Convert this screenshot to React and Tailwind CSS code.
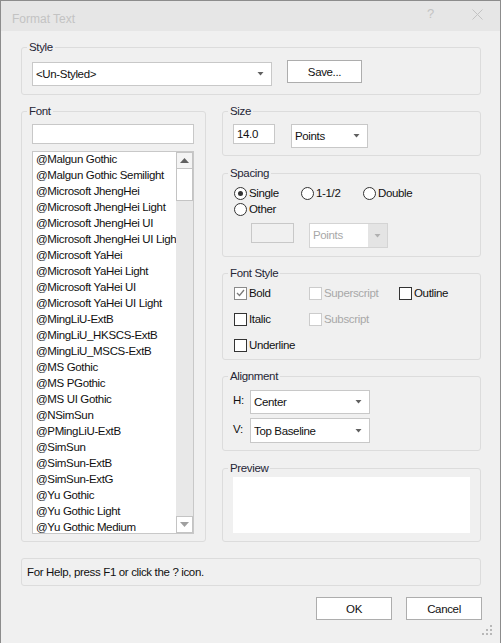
import { useState } from 'react'

const FONTS = [
  '@Malgun Gothic',
  '@Malgun Gothic Semilight',
  '@Microsoft JhengHei',
  '@Microsoft JhengHei Light',
  '@Microsoft JhengHei UI',
  '@Microsoft JhengHei UI Light',
  '@Microsoft YaHei',
  '@Microsoft YaHei Light',
  '@Microsoft YaHei UI',
  '@Microsoft YaHei UI Light',
  '@MingLiU-ExtB',
  '@MingLiU_HKSCS-ExtB',
  '@MingLiU_MSCS-ExtB',
  '@MS Gothic',
  '@MS PGothic',
  '@MS UI Gothic',
  '@NSimSun',
  '@PMingLiU-ExtB',
  '@SimSun',
  '@SimSun-ExtB',
  '@SimSun-ExtG',
  '@Yu Gothic',
  '@Yu Gothic Light',
  '@Yu Gothic Medium',
]

function GroupBox({ label, className = '', children }) {
  return (
    <fieldset className={`border border-[#dcdcdc] rounded-[3px] ${className}`}>
      <legend className="ml-[5px] px-[2px] leading-[14px] text-[#262636]">{label}</legend>
      {children}
    </fieldset>
  )
}

function Arrow({ color = '#606060' }) {
  return (
    <svg width="7" height="4" viewBox="0 0 7 4" className="shrink-0">
      <path d="M0.5 0h6L3.5 3.5z" fill={color} />
    </svg>
  )
}

function Combo({ value, className = '' }) {
  return (
    <div className={`flex items-center bg-white border border-[#c8c8c8] pl-[3px] pr-[7px] ${className}`}>
      <span className="flex-1 truncate text-[#111]">{value}</span>
      <Arrow />
    </div>
  )
}

function Radio({ checked, label }) {
  return (
    <div className="flex items-center h-[16px]">
      <span className="w-[13px] h-[13px] rounded-full border border-[#333] bg-white flex items-center justify-center">
        {checked && <span className="w-[5px] h-[5px] rounded-full bg-[#333]" />}
      </span>
      <span className="ml-[2px] text-[#111]">{label}</span>
    </div>
  )
}

function Check({ label, checked, disabled, dim }) {
  const box = disabled ? 'border-[#cccccc]' : dim ? 'border-[#8a8a8a]' : 'border-[#333]'
  return (
    <div className="flex items-center">
      <span className={`w-[13px] h-[13px] border bg-white flex items-center justify-center ${box}`}>
        {checked && (
          <svg width="9" height="8" viewBox="0 0 9 8">
            <path d="M1 4l2.5 2.5L8 1" fill="none" stroke="#7a7a7a" strokeWidth="1.3" />
          </svg>
        )}
      </span>
      <span className={`ml-[2px] ${disabled ? 'text-[#a8a8a8]' : 'text-[#111]'}`}>{label}</span>
    </div>
  )
}

export default function App() {
  const [selected] = useState(null)

  return (
    <div className="w-[501px] h-[643px] bg-[#f0f0f0] border border-b-0 border-[#8c8c8c] font-['Liberation_Sans',sans-serif] text-[11.5px] tracking-[-0.35px] leading-[14px] overflow-hidden">
      <div className="h-[30px] bg-[#e6e6e6] flex items-center text-[#c3c3c3] pt-[6px]">
        <span className="ml-[11px] text-[12px] tracking-normal">Format Text</span>
        <span className="ml-auto mr-[38px] text-[13px] -mt-[10px]">?</span>
        <svg width="11" height="11" viewBox="0 0 11 11" className="mr-[17px] -mt-[10px]">
          <path d="M0.5 0.5l10 10M10.5 0.5l-10 10" stroke="#c3c3c3" strokeWidth="1" />
        </svg>
      </div>

      <div className="w-[460px] ml-[20px]">
        <GroupBox label="Style" className="mt-[9px]">
          <div className="flex items-start pl-[10px] pt-[6px] pb-[8px]">
            <Combo value="<Un-Styled>" className="w-[240px] h-[24px] mt-[2px]" />
            <button className="ml-[15px] w-[75px] h-[23px] bg-white border border-[#adadad] text-[#111]">
              Save...
            </button>
          </div>
        </GroupBox>

        <div className="flex mt-[9px]">
          <GroupBox label="Font" className="w-[185px] shrink-0">
            <div className="pl-[10px] pt-[6px] pb-[6px]">
              <div className="w-[162px] h-[20px] bg-white border border-[#c8c8c8]" />
              <div className="mt-[7px] w-[162px] h-[383px] bg-white border border-[#c8c8c8] flex">
                <ul className="flex-1 overflow-hidden">
                  {FONTS.map((f) => (
                    <li
                      key={f}
                      className={`h-[16px] pl-[3px] whitespace-nowrap overflow-hidden leading-[14px] ${
                        selected === f ? 'bg-[#0078d7] text-white' : 'text-[#111]'
                      }`}
                    >
                      {f}
                    </li>
                  ))}
                </ul>
                <div className="w-[17px] bg-[#e8e8e8] flex flex-col">
                  <div className="h-[17px] bg-[#f4f4f4] border border-[#c4c4c4] flex items-center justify-center">
                    <svg width="9" height="5" viewBox="0 0 9 5">
                      <path d="M0 5h9L4.5 0z" fill="#606060" />
                    </svg>
                  </div>
                  <div className="h-[32px] bg-white border border-t-0 border-[#c4c4c4]" />
                  <div className="flex-1" />
                  <div className="h-[17px] bg-white border border-[#c4c4c4] flex items-center justify-center">
                    <svg width="9" height="5" viewBox="0 0 9 5">
                      <path d="M0 0h9L4.5 5z" fill="#a0a0a0" />
                    </svg>
                  </div>
                </div>
              </div>
            </div>
          </GroupBox>

          <div className="ml-[16px] w-[259px] flex flex-col">
            <GroupBox label="Size">
              <div className="flex items-start pl-[10px] pt-[6px] pb-[7px]">
                <div className="w-[42px] h-[20px] bg-white border border-[#c8c8c8] pl-[3px] leading-[18px] text-[#111]">
                  14.0
                </div>
                <Combo value="Points" className="ml-[16px] w-[77px] h-[24px]" />
              </div>
            </GroupBox>

            <GroupBox label="Spacing" className="mt-[10px]">
              <div className="pl-[11px] pt-[5px] pb-[8px]">
                <div className="flex">
                  <div className="w-[67px]">
                    <Radio checked label="Single" />
                  </div>
                  <div className="w-[62px]">
                    <Radio label="1-1/2" />
                  </div>
                  <Radio label="Double" />
                </div>
                <Radio label="Other" />
                <div className="flex items-start mt-[6px] pl-[17px]">
                  <div className="w-[43px] h-[20px] bg-[#f0f0f0] border border-[#c8c8c8]" />
                  <div className="ml-[15px] w-[79px] h-[25px] bg-white border border-[#d4d4d4] flex">
                    <span className="flex-1 pl-[3px] leading-[23px] text-[#a8a8a8]">Points</span>
                    <span className="w-[19px] bg-[#e4e4e4] flex items-center justify-center">
                      <Arrow color="#b0b0b0" />
                    </span>
                  </div>
                </div>
              </div>
            </GroupBox>

            <GroupBox label="Font Style" className="mt-[9px]">
              <div className="pl-[11px] pb-[1px]">
                <div className="flex h-[26px] items-center">
                  <div className="w-[75px]">
                    <Check label="Bold" checked dim />
                  </div>
                  <div className="w-[90px]">
                    <Check label="Superscript" disabled />
                  </div>
                  <Check label="Outline" />
                </div>
                <div className="flex h-[26px] items-center">
                  <div className="w-[75px]">
                    <Check label="Italic" />
                  </div>
                  <Check label="Subscript" disabled />
                </div>
                <div className="flex h-[26px] items-center">
                  <Check label="Underline" />
                </div>
              </div>
            </GroupBox>

            <GroupBox label="Alignment" className="mt-[9px]">
              <div className="pl-[10px] pt-[7px] pb-[7px] flex flex-col gap-[4px]">
                <div className="flex items-center">
                  <span className="w-[17px] text-[#111] -mt-[4px]">H:</span>
                  <Combo value="Center" className="w-[120px] h-[24px]" />
                </div>
                <div className="flex items-center">
                  <span className="w-[17px] text-[#111] -mt-[4px]">V:</span>
                  <Combo value="Top Baseline" className="w-[120px] h-[25px]" />
                </div>
              </div>
            </GroupBox>

            <GroupBox label="Preview" className="mt-[10px]">
              <div className="pl-[10px] pt-[2px] pb-[8px]">
                <div className="w-[237px] h-[56px] bg-white" />
              </div>
            </GroupBox>
          </div>
        </div>

        <div className="mt-[16px] h-[28px] border border-[#dcdcdc] rounded-[3px] flex items-center pl-[5px] text-[#111]">
          For Help, press F1 or click the ? icon.
        </div>

        <div className="flex justify-end mt-[11px] -mr-px">
          <button className="w-[76px] h-[23px] bg-white border border-[#adadad] text-[#111]">OK</button>
          <button className="ml-[14px] w-[76px] h-[23px] bg-white border border-[#adadad] text-[#111]">Cancel</button>
        </div>
      </div>

      <div className="flex justify-end pr-[8px] mt-[5px]">
        <svg width="10" height="10" viewBox="0 0 10 10">
          <rect x="8" y="0" width="2" height="2" fill="#b8b8b8" />
          <rect x="4" y="4" width="2" height="2" fill="#b8b8b8" />
          <rect x="8" y="4" width="2" height="2" fill="#b8b8b8" />
          <rect x="0" y="8" width="2" height="2" fill="#b8b8b8" />
          <rect x="4" y="8" width="2" height="2" fill="#b8b8b8" />
          <rect x="8" y="8" width="2" height="2" fill="#b8b8b8" />
        </svg>
      </div>
    </div>
  )
}
